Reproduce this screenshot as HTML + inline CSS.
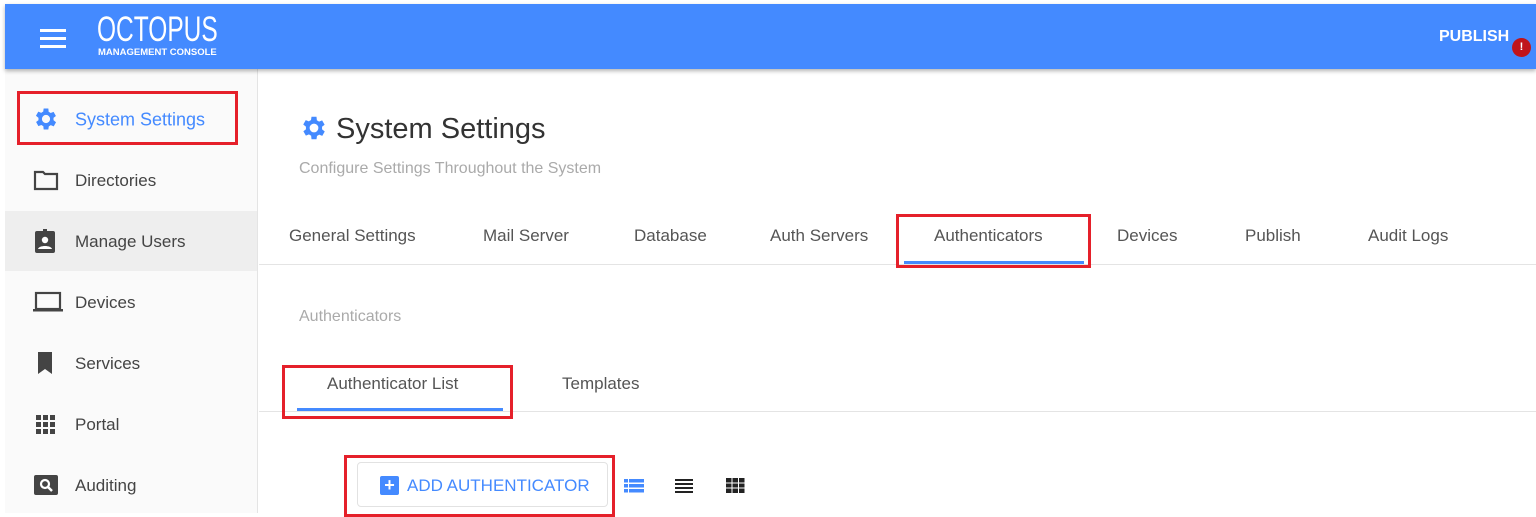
<!DOCTYPE html><html><head><style>
*{margin:0;padding:0;box-sizing:border-box}
body{width:1536px;height:513px;overflow:hidden;background:#fff;font-family:"Liberation Sans",sans-serif;position:relative}
.a{position:absolute}
.hdr{left:5px;top:4px;width:1531px;height:65px;background:#448aff;box-shadow:0 2px 4px rgba(0,0,0,.3);z-index:2}
.side{left:5px;top:69px;width:253px;height:444px;background:#fafafa;border-right:1px solid #e4e4e4}
.item{position:absolute;left:0;width:252px;height:60px;font-size:17px;color:#444}
.item span{position:absolute;left:70px;top:50%;transform:translateY(-45%)}
.item svg{position:absolute;left:28px;top:50%;transform:translateY(-50%)}
.red{position:absolute;border:3px solid #e5202a}
.tab{position:absolute;top:226px;font-size:17px;color:#555}
</style></head><body>
<div class="a hdr">
 <div class="a" style="left:35px;top:25px;width:26px;height:3px;background:#fff;box-shadow:0 8px 0 #fff,0 16px 0 #fff"></div>
 <div class="a" style="left:92px;top:6px;color:#fff;font-size:35px;transform:scaleX(.7);transform-origin:left">OCTOPUS</div>
 <div class="a" style="left:93px;top:43px;color:#fff;font-size:9.5px;font-weight:bold">MANAGEMENT CONSOLE</div>
 <div class="a" style="left:1434px;top:24px;color:#fff;font-size:16px;font-weight:bold">PUBLISH</div>
 <div class="a" style="left:1507px;top:34px;width:19px;height:19px;border-radius:50%;background:#c0141b;color:#fff;font-size:11px;font-weight:bold;text-align:center;line-height:19px">!</div>
</div>
<div class="a side">
 <div class="item" style="top:20px;color:#448aff;font-size:18px"><svg width="28" height="28" viewBox="0 0 24 24" style="left:27px"><path fill="#448aff" d="M19.4 13a7.5 7.5 0 000-2l2.1-1.6-2-3.5-2.5 1a7 7 0 00-1.7-1L15 3h-4l-.4 2.7a7 7 0 00-1.7 1l-2.5-1-2 3.5L6.6 11a7.5 7.5 0 000 2l-2.1 1.6 2 3.5 2.5-1a7 7 0 001.7 1L11 21h4l.4-2.7a7 7 0 001.7-1l2.5 1 2-3.5zM13 15.5a3.5 3.5 0 110-7 3.5 3.5 0 010 7z" transform="translate(-1 0)"/></svg><span>System Settings</span></div>
 <div class="item" style="top:81px"><svg width="26" height="22" viewBox="0 0 26 22"><path d="M2 3h8l2 2h12v15H2z" fill="none" stroke="#444" stroke-width="2.2"/></svg><span>Directories</span></div>
 <div class="item" style="top:142px;background:#eee"><svg width="24" height="26" viewBox="0 0 24 26"><rect x="2" y="3" width="20" height="22" rx="2" fill="#444"/><circle cx="12" cy="12" r="3.2" fill="#fff"/><path d="M5 21c1-4 13-4 14 0z" fill="#fff"/><rect x="10" y="1" width="4" height="4" fill="#444"/></svg><span>Manage Users</span></div>
 <div class="item" style="top:203px"><svg width="30" height="22" viewBox="0 0 30 22"><rect x="3" y="2" width="24" height="16" fill="none" stroke="#444" stroke-width="2.2"/><rect x="0" y="18" width="30" height="2.5" fill="#444"/></svg><span>Devices</span></div>
 <div class="item" style="top:264px"><svg width="24" height="26" viewBox="0 0 24 26"><path d="M5 2h14v22l-7-5-7 5z" fill="#444"/></svg><span>Services</span></div>
 <div class="item" style="top:325px"><svg width="24" height="24" viewBox="0 0 24 24" fill="#444"><rect x="3" y="3" width="5" height="5"/><rect x="10" y="3" width="5" height="5"/><rect x="17" y="3" width="5" height="5"/><rect x="3" y="10" width="5" height="5"/><rect x="10" y="10" width="5" height="5"/><rect x="17" y="10" width="5" height="5"/><rect x="3" y="17" width="5" height="5"/><rect x="10" y="17" width="5" height="5"/><rect x="17" y="17" width="5" height="5"/></svg><span>Portal</span></div>
 <div class="item" style="top:386px"><svg width="26" height="24" viewBox="0 0 26 24"><rect x="1" y="2" width="24" height="20" rx="2" fill="#444"/><circle cx="12" cy="11" r="4" fill="none" stroke="#fff" stroke-width="2.2"/><path d="M15 14l4 4" stroke="#fff" stroke-width="2.5"/></svg><span>Auditing</span></div>
</div>
<div class="red" style="left:17px;top:91px;width:221px;height:54px"></div>
<svg class="a" style="left:299px;top:113px" width="30" height="30" viewBox="0 0 24 24"><path fill="#448aff" d="M19.4 13a7.5 7.5 0 000-2l2.1-1.6-2-3.5-2.5 1a7 7 0 00-1.7-1L15 3h-4l-.4 2.7a7 7 0 00-1.7 1l-2.5-1-2 3.5L6.6 11a7.5 7.5 0 000 2l-2.1 1.6 2 3.5 2.5-1a7 7 0 001.7 1L11 21h4l.4-2.7a7 7 0 001.7-1l2.5 1 2-3.5zM13 15.5a3.5 3.5 0 110-7 3.5 3.5 0 010 7z" transform="translate(-1 0)"/></svg>
<div class="a" style="left:336px;top:113px;font-size:29px;color:#333">System Settings</div>
<div class="a" style="left:299px;top:160px;font-size:16px;color:#aaa">Configure Settings Throughout the System</div>
<div class="tab" style="left:289px">General Settings</div>
<div class="tab" style="left:483px">Mail Server</div>
<div class="tab" style="left:634px">Database</div>
<div class="tab" style="left:770px">Auth Servers</div>
<div class="tab" style="left:934px">Authenticators</div>
<div class="tab" style="left:1117px">Devices</div>
<div class="tab" style="left:1245px">Publish</div>
<div class="tab" style="left:1368px">Audit Logs</div>
<div class="a" style="left:259px;top:264px;width:1277px;height:1px;background:#e4e4e4"></div>
<div class="a" style="left:904px;top:261px;width:180px;height:3px;background:#448aff"></div>
<div class="red" style="left:896px;top:214px;width:195px;height:54px"></div>
<div class="a" style="left:299px;top:308px;font-size:16px;color:#aaa">Authenticators</div>
<div class="tab" style="left:327px;top:374px">Authenticator List</div>
<div class="tab" style="left:562px;top:374px">Templates</div>
<div class="a" style="left:259px;top:411px;width:1277px;height:1px;background:#e4e4e4"></div>
<div class="a" style="left:297px;top:408px;width:206px;height:3px;background:#448aff"></div>
<div class="red" style="left:282px;top:365px;width:231px;height:54px"></div>
<div class="a" style="left:357px;top:462px;width:251px;height:45px;border:1px solid #e2e2e2;border-radius:4px;background:#fff"></div>
<div class="a" style="left:380px;top:476px;width:19px;height:19px;background:#448aff;border-radius:2px;color:#fff;font-size:18px;font-weight:bold;text-align:center;line-height:19px">+</div>
<div class="a" style="left:407px;top:476px;font-size:17px;color:#448aff">ADD AUTHENTICATOR</div>
<div class="red" style="left:344px;top:455px;width:271px;height:62px"></div>
<svg class="a" style="left:624px;top:478px" width="20" height="16" viewBox="0 0 20 16" fill="#448aff"><rect x="0" y="1" width="4" height="3.5"/><rect x="5" y="1" width="15" height="3.5"/><rect x="0" y="6" width="4" height="3.5"/><rect x="5" y="6" width="15" height="3.5"/><rect x="0" y="11" width="4" height="3.5"/><rect x="5" y="11" width="15" height="3.5"/></svg>
<svg class="a" style="left:675px;top:478px" width="18" height="16" viewBox="0 0 18 16" fill="#222"><rect y="1" width="18" height="2"/><rect y="5" width="18" height="2"/><rect y="9" width="18" height="2"/><rect y="13" width="18" height="2"/></svg>
<svg class="a" style="left:726px;top:478px" width="19" height="15" viewBox="0 0 19 15" fill="#222"><rect x="0" y="0" width="5.5" height="4.5"/><rect x="6.5" y="0" width="5.5" height="4.5"/><rect x="13" y="0" width="5.5" height="4.5"/><rect x="0" y="5.5" width="5.5" height="4"/><rect x="6.5" y="5.5" width="5.5" height="4"/><rect x="13" y="5.5" width="5.5" height="4"/><rect x="0" y="10.5" width="5.5" height="4.5"/><rect x="6.5" y="10.5" width="5.5" height="4.5"/><rect x="13" y="10.5" width="5.5" height="4.5"/></svg>
</body></html>
